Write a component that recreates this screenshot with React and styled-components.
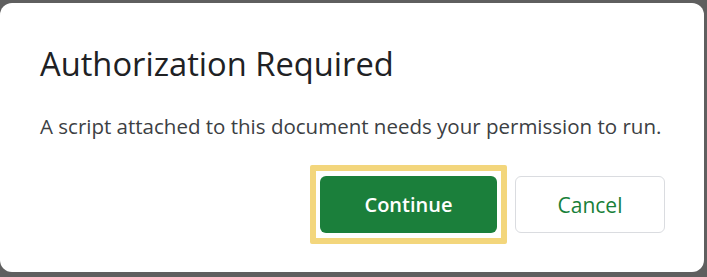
import React from 'react';
import styled, { createGlobalStyle } from 'styled-components';

const GlobalStyle = createGlobalStyle`
    html, body {
        margin: 0;
        padding: 0;
        background: #5f5f5f;
    }
    body {
        font-family: "Open Sans", Roboto, Arial, sans-serif;
    }
`;

const Page = styled.div`
    width: 707px;
    height: 277px;
    padding-top: 3px;
    box-sizing: border-box;
`;

const Dialog = styled.div`
    width: 704px;
    height: 269px;
    box-sizing: border-box;
    background: #ffffff;
    border-radius: 12px;
    padding: 41px 39px 0 40px;
    display: flex;
    flex-direction: column;
`;

const Title = styled.h1`
    margin: 0;
    font-weight: 400;
    font-size: 32.7px;
    line-height: 40px;
    color: #202124;
`;

const Message = styled.p`
    margin: 30px 0 0 0;
    font-size: 20.5px;
    line-height: 24px;
    color: #3c4043;
    white-space: nowrap;
`;

const Actions = styled.div`
    display: flex;
    justify-content: flex-end;
    align-items: center;
    gap: 8px;
    margin-top: 27px;
`;

const Highlight = styled.div`
    padding: 5px 4px;
    border: 6px solid #f3d67c;
    background: #ffffff;
    border-radius: 2px;
`;

const Button = styled.button`
    height: 57px;
    width: ${p => p.width}px;
    border-radius: 6px;
    font-family: "Open Sans", Roboto, Arial, sans-serif;
    cursor: pointer;
    display: flex;
    align-items: center;
    justify-content: center;
    box-sizing: border-box;
    ${p => p.primary ? `
        background: #1b7f3b;
        color: #ffffff;
        border: none;
        font-size: 20px;
        font-weight: 600;
    ` : `
        background: #ffffff;
        color: #188038;
        border: 1px solid #dadce0;
        font-size: 21px;
        font-weight: 500;
    `}
`;

const App = () => {
    return (
        <Page>
            <GlobalStyle />
            <Dialog>
                <Title>Authorization Required</Title>
                <Message>A script attached to this document needs your permission to run.</Message>
                <Actions>
                    <Highlight>
                        <Button primary width={177}>Continue</Button>
                    </Highlight>
                    <Button width={150}>Cancel</Button>
                </Actions>
            </Dialog>
        </Page>
    );
};

export default App;
